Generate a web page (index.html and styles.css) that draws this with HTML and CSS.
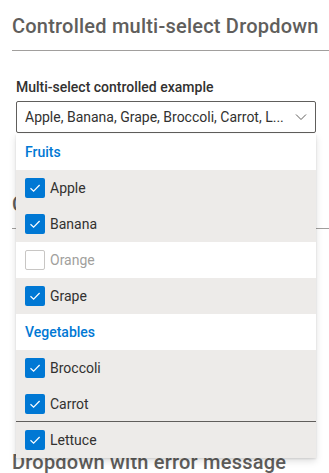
FILE: index.html
```html
<!DOCTYPE html>
<html>
<head>
<meta charset="utf-8">
<link rel="stylesheet" href="styles.css">
</head>
<body>
<div class="page">
  <section class="section">
    <h2 class="heading">Controlled multi-select Dropdown</h2>
    <div class="example">
      <label class="label">Multi-select controlled example</label>
      <div class="dropdown">
        <span class="dropdown-title">Apple, Banana, Grape, Broccoli, Carrot, L...</span>
        <svg class="chevron" width="12" height="12" viewBox="0 0 12 12"><path d="M1 3.5 L6 8.5 L11 3.5" fill="none" stroke="#605e5c" stroke-width="1"/></svg>
      </div>
    </div>
  </section>

  <section class="section section-2">
    <h2 class="heading">Controlled Dropdown</h2>
    <div class="example">
      <label class="label">Controlled example</label>
      <div class="dropdown"><span class="dropdown-title">Banana</span></div>
    </div>
  </section>

  <section class="section section-3">
    <h2 class="heading">Dropdown with error message</h2>
  </section>

  <div class="callout">
    <div class="header">Fruits</div>
    <div class="item selected"><span class="box checked"><svg width="20" height="20" viewBox="0 0 20 20"><path d="M5.5 10.2 L8.6 13.2 L14.6 7" fill="none" stroke="#fff" stroke-width="1.2"/></svg></span><span class="text">Apple</span></div>
    <div class="item selected"><span class="box checked"><svg width="20" height="20" viewBox="0 0 20 20"><path d="M5.5 10.2 L8.6 13.2 L14.6 7" fill="none" stroke="#fff" stroke-width="1.2"/></svg></span><span class="text">Banana</span></div>
    <div class="item disabled"><span class="box"></span><span class="text">Orange</span></div>
    <div class="item selected"><span class="box checked"><svg width="20" height="20" viewBox="0 0 20 20"><path d="M5.5 10.2 L8.6 13.2 L14.6 7" fill="none" stroke="#fff" stroke-width="1.2"/></svg></span><span class="text">Grape</span></div>
    <div class="header">Vegetables</div>
    <div class="item selected"><span class="box checked"><svg width="20" height="20" viewBox="0 0 20 20"><path d="M5.5 10.2 L8.6 13.2 L14.6 7" fill="none" stroke="#fff" stroke-width="1.2"/></svg></span><span class="text">Broccoli</span></div>
    <div class="item selected divider"><span class="box checked"><svg width="20" height="20" viewBox="0 0 20 20"><path d="M5.5 10.2 L8.6 13.2 L14.6 7" fill="none" stroke="#fff" stroke-width="1.2"/></svg></span><span class="text">Carrot</span></div>
    <div class="item selected"><span class="box checked"><svg width="20" height="20" viewBox="0 0 20 20"><path d="M5.5 10.2 L8.6 13.2 L14.6 7" fill="none" stroke="#fff" stroke-width="1.2"/></svg></span><span class="text">Lettuce</span></div>
  </div>
</div>
</body>
</html>
```

FILE: styles.css
```css
html, body {
  margin: 0;
  padding: 0;
  background: #fff;
  overflow: hidden;
}
body {
  font-family: Roboto, "Open Sans", sans-serif;
  color: #323130;
  -webkit-font-smoothing: antialiased;
}
.page {
  position: relative;
  padding-left: 12px;
  height: 473px;
  overflow: hidden;
}
.heading {
  margin: 0;
  padding: 12px 0 10px;
  font-size: 20px;
  line-height: 28px;
  font-weight: 500;
  color: #605e5c;
  border-bottom: 1px solid #a19f9d;
  white-space: nowrap;
  letter-spacing: 0.22px;
}
.example {
  padding-left: 4px;
  width: 300px;
  padding-top: 21px;
}
.label {
  display: block;
  font-size: 14px;
  font-weight: 500;
  line-height: 20px;
  padding: 5px 0 4px;
  color: #323130;
}
.dropdown {
  box-sizing: border-box;
  height: 32px;
  border: 1px solid #605e5c;
  border-radius: 2px;
  display: flex;
  align-items: center;
  padding: 0 8px;
  font-size: 14px;
  gap: 8px;
}
.dropdown-title {
  flex: 1;
  white-space: nowrap;
  overflow: hidden;
}
.chevron {
  flex: none;
}
.section-2 {
  margin-top: 45px;
}
.section-3 {
  margin-top: 125px;
}
.callout {
  position: absolute;
  left: 16px;
  top: 134px;
  width: 300px;
  background: #fff;
  box-shadow: 0 3.2px 7.2px rgba(0,0,0,0.132), 0 0.6px 1.8px rgba(0,0,0,0.108);
}
.header {
  height: 36px;
  display: flex;
  align-items: center;
  padding-left: 9px;
  font-size: 14px;
  font-weight: 500;
  color: #0078d4;
}
.item {
  height: 36px;
  display: flex;
  align-items: center;
  padding-left: 9px;
  gap: 5px;
  font-size: 14px;
  color: #323130;
}
.item.selected {
  background: #edebe9;
}
.item.divider {
  box-shadow: inset 0 -1px 0 #605e5c;
}
.item.disabled {
  color: #a19f9d;
}
.box {
  box-sizing: border-box;
  width: 20px;
  height: 20px;
  border: 1px solid #c8c6c4;
  border-radius: 2px;
  background: #fff;
  display: block;
  flex: none;
}
.box.checked {
  border: none;
  background: #0078d4;
}
.box svg {
  display: block;
}
```
